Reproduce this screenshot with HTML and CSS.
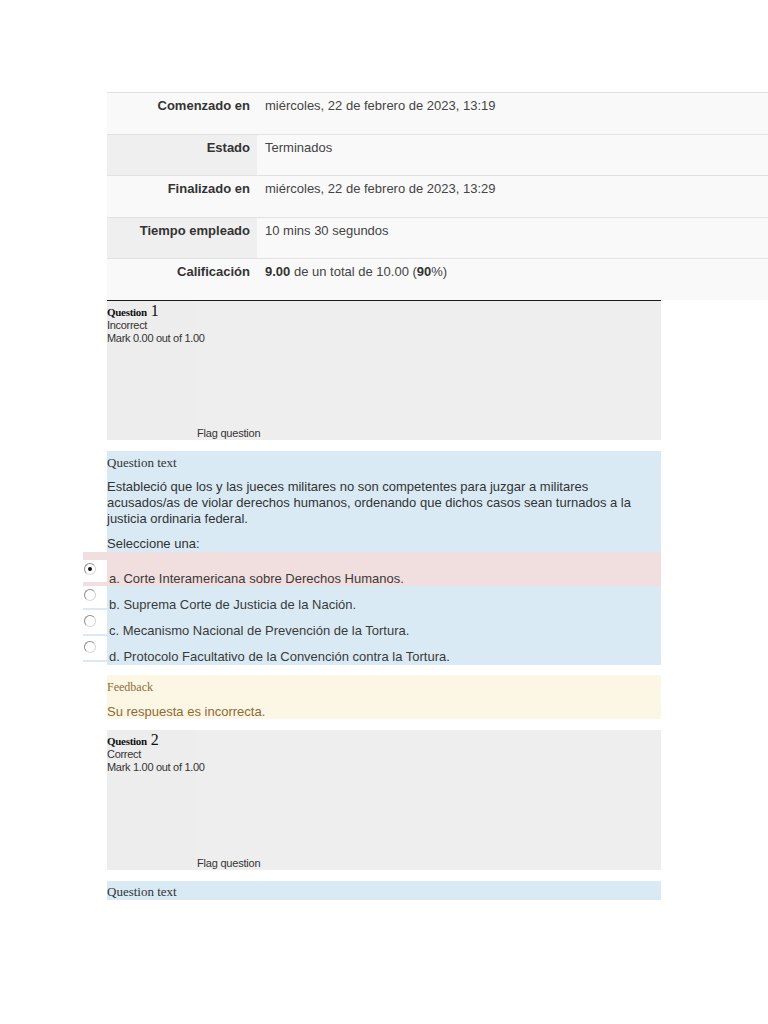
FILE: index.html
```html
<!DOCTYPE html>
<html lang="es">
<head>
<meta charset="utf-8">
<title>Revisión del intento</title>
<link rel="stylesheet" href="styles.css">
</head>
<body>
<div class="page">
  <table class="summary">
    <tr class="odd"><th>Comenzado en</th><td>miércoles, 22 de febrero de 2023, 13:19</td></tr>
    <tr class="even"><th>Estado</th><td>Terminados</td></tr>
    <tr class="odd"><th>Finalizado en</th><td>miércoles, 22 de febrero de 2023, 13:29</td></tr>
    <tr class="even"><th>Tiempo empleado</th><td>10 mins 30 segundos</td></tr>
    <tr class="odd"><th>Calificación</th><td><b>9.00</b> de un total de 10.00 (<b>90</b>%)</td></tr>
  </table>

  <div class="que">
    <div class="info first">
      <div class="qno"><span class="qword">Question</span> <span class="qnum">1</span></div>
      <div class="state">Incorrect</div>
      <div class="grade">Mark 0.00 out of 1.00</div>
      <div class="flag">Flag question</div>
    </div>
    <div class="formulation">
      <div class="qtlabel">Question text</div>
      <p class="qtext">Estableció que los y las jueces militares no son competentes para juzgar a militares acusados/as de violar derechos humanos, ordenando que dichos casos sean turnados a la justicia ordinaria federal.</p>
      <div class="prompt">Seleccione una:</div>
      <div class="answer">
        <div class="opt incorrect">
          <div class="rc"><span class="radio checked"></span></div>
          <div class="lbl">a. Corte Interamericana sobre Derechos Humanos.</div>
        </div>
        <div class="opt">
          <div class="rc"><span class="radio"></span></div>
          <div class="lbl">b. Suprema Corte de Justicia de la Nación.</div>
        </div>
        <div class="opt">
          <div class="rc"><span class="radio"></span></div>
          <div class="lbl">c. Mecanismo Nacional de Prevención de la Tortura.</div>
        </div>
        <div class="opt">
          <div class="rc"><span class="radio"></span></div>
          <div class="lbl">d. Protocolo Facultativo de la Convención contra la Tortura.</div>
        </div>
      </div>
    </div>
    <div class="feedback">
      <div class="fblabel">Feedback</div>
      <div class="fbtext">Su respuesta es incorrecta.</div>
    </div>
  </div>

  <div class="que">
    <div class="info">
      <div class="qno"><span class="qword">Question</span> <span class="qnum">2</span></div>
      <div class="state">Correct</div>
      <div class="grade">Mark 1.00 out of 1.00</div>
      <div class="flag">Flag question</div>
    </div>
    <div class="formulation short">
      <div class="qtlabel">Question text</div>
    </div>
  </div>
</div>
</body>
</html>
```

FILE: styles.css
```css
html, body {
  margin: 0;
  padding: 0;
  background: #fff;
  overflow-x: hidden;
}
body {
  font-family: "Liberation Sans", Arial, sans-serif;
  color: #333;
}
.page {
  padding: 92px 0 0 107px;
  width: 554px;
}
.summary {
  border-collapse: collapse;
  width: 680px;
  font-size: 13px;
}
.summary th, .summary td {
  border-top: 1px solid #e2e2e2;
  vertical-align: top;
  height: 41.6px;
  box-sizing: border-box;
  padding: 5px 8px 0 8px;
  line-height: 15px;
  background: #f9f9f9;
}
.summary th {
  width: 150px;
  text-align: right;
  font-weight: bold;
  color: #333;
  padding-right: 7px;
  box-sizing: border-box;
}
.summary td {
  color: #444;
}
.summary tr.even th {
  background: #efefef;
}
.summary b {
  color: #333;
}

.que {
  margin-bottom: 11px;
}
.info {
  background: linear-gradient(to right, #ededed 0, #ededed 90px, #eeeeee 90px);
  height: 140px;
  display: flex;
  flex-direction: column;
  box-sizing: border-box;
  padding-top: 2px;
  color: #333;
}
.info.first {
  border-top: 1px solid #1a1a1a;
}
.qno {
  font-family: "Liberation Serif", "Times New Roman", serif;
  color: #111;
  line-height: 16px;
  height: 16px;
}
.qword {
  font-weight: bold;
  font-size: 11px;
  letter-spacing: -0.3px;
}
.qnum {
  font-size: 16px;
}
.state, .grade {
  font-size: 11px;
  line-height: 13px;
  letter-spacing: -0.3px;
}
.flag {
  margin-top: auto;
  padding-left: 90px;
  font-size: 11px;
  line-height: 14px;
  letter-spacing: -0.2px;
}

.formulation {
  margin-top: 11px;
  background: #d9eaf4;
  padding-top: 5px;
}
.formulation.short {
  height: 19px;
  padding-top: 4px;
  box-sizing: border-box;
}
.qtlabel {
  font-family: "Liberation Serif", "Times New Roman", serif;
  font-size: 13px;
  line-height: 14px;
  color: #333;
}
.qtext {
  margin: 9px 0 0 0;
  font-size: 13px;
  line-height: 16px;
  color: #333;
}
.prompt {
  margin-top: 9px;
  font-size: 13px;
  line-height: 16px;
  color: #333;
}
.answer {
  margin-left: -24px;
  padding-bottom: 1px;
}
.opt {
  display: flex;
}
.opt.incorrect {
  background: #f1dede;
  padding-top: 8px;
}
.rc {
  width: 24px;
  height: 24px;
  background: #fff;
  border-bottom: 2px solid #d9eaf4;
  padding: 3px 0 0 1px;
  box-sizing: border-box;
  flex: none;
}
.opt.incorrect .rc {
  border-bottom-color: #f1dede;
}
.radio {
  display: block;
  width: 10px;
  height: 10px;
  border-radius: 50%;
  border: 1px solid #8c8c8c;
  border-bottom-color: #dadada;
  border-right-color: #d2d2d2;
  background: #fff;
  position: relative;
}
.radio.checked::after {
  content: "";
  position: absolute;
  left: 3px;
  top: 3px;
  width: 4px;
  height: 4px;
  border-radius: 50%;
  background: #111;
}
.lbl {
  flex: 1;
  padding: 11px 0 0 2px;
  font-size: 13px;
  line-height: 15px;
  color: #3a3a3a;
  background: #d9eaf4;
}
.opt.incorrect .lbl {
  background: #f1dede;
}

.feedback {
  margin-top: 10px;
  background: #fcf7e4;
  padding: 5px 0 0 0;
  height: 44px;
  box-sizing: border-box;
}
.fblabel {
  font-family: "Liberation Serif", "Times New Roman", serif;
  font-size: 12px;
  line-height: 14px;
  color: #8a6d3b;
}
.fbtext {
  margin-top: 10px;
  font-size: 13px;
  line-height: 15px;
  color: #8e6a34;
}
```
